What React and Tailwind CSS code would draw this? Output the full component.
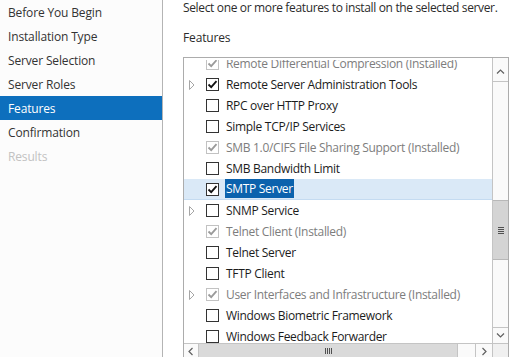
import React from 'react'

const steps = [
  { label: 'Before You Begin' },
  { label: 'Installation Type' },
  { label: 'Server Selection' },
  { label: 'Server Roles' },
  { label: 'Features', active: true },
  { label: 'Confirmation' },
  { label: 'Results', disabled: true },
]

const features = [
  { label: 'Remote Differential Compression (Installed)', checked: true, installed: true },
  { label: 'Remote Server Administration Tools', checked: true, expand: true },
  { label: 'RPC over HTTP Proxy' },
  { label: 'Simple TCP/IP Services' },
  { label: 'SMB 1.0/CIFS File Sharing Support (Installed)', checked: true, installed: true },
  { label: 'SMB Bandwidth Limit' },
  { label: 'SMTP Server', checked: true, selected: true },
  { label: 'SNMP Service', expand: true },
  { label: 'Telnet Client (Installed)', checked: true, installed: true },
  { label: 'Telnet Server' },
  { label: 'TFTP Client' },
  { label: 'User Interfaces and Infrastructure (Installed)', checked: true, installed: true, expand: true },
  { label: 'Windows Biometric Framework' },
  { label: 'Windows Feedback Forwarder' },
]

function Checkbox({ checked, installed }) {
  return (
    <span
      className={
        'w-[13px] h-[13px] shrink-0 border bg-white flex items-center justify-center ' +
        (installed ? 'border-[#c2c2c2]' : 'border-[#333333]')
      }
    >
      {checked && (
        <svg width="11" height="11" viewBox="0 0 11 11">
          <path
            d="M1.5 5.5 L4.2 8.2 L9.5 2.2"
            fill="none"
            stroke={installed ? '#9a9a9a' : '#111111'}
            strokeWidth="1.8"
          />
        </svg>
      )}
    </span>
  )
}

function Expander() {
  return (
    <svg width="7" height="10" viewBox="0 0 7 10" className="shrink-0">
      <path d="M1.5 0.5 L6 5 L1.5 9.5 Z" fill="none" stroke="#a6a6a6" strokeWidth="1" />
    </svg>
  )
}

function Caret({ dir }) {
  const d = {
    up: 'M1 5.5 L4.5 2 L8 5.5',
    down: 'M1 2.5 L4.5 6 L8 2.5',
    left: 'M5.5 1 L2 4.5 L5.5 8',
    right: 'M2.5 1 L6 4.5 L2.5 8',
  }[dir]
  return (
    <svg width="9" height="9" viewBox="0 0 9 9">
      <path d={d} fill="none" stroke="#606060" strokeWidth="1.2" />
    </svg>
  )
}

export default function App() {
  return (
    <div className="w-[515px] h-[357px] flex bg-white overflow-hidden text-[12px] font-['Open_Sans','Noto_Sans',sans-serif] tracking-[-0.15px]">
      {/* Wizard steps */}
      <aside className="w-[163px] shrink-0 bg-[#fcfcfc] border-r border-[#b4b4b4]">
        {steps.map((s) => (
          <div
            key={s.label}
            className={
              'h-[24px] pl-[8px] pt-[1px] flex items-center ' +
              (s.active
                ? 'bg-[#0d6fbd] text-white'
                : s.disabled
                ? 'text-[#c2c2c2]'
                : 'text-[#333333]')
            }
          >
            {s.label}
          </div>
        ))}
      </aside>

      {/* Main */}
      <main className="flex-1 min-w-0 pl-[20px] pr-[6px]">
        <p className="h-[16px] leading-[16px] text-[#2b2b2b] whitespace-nowrap tracking-[-0.35px]">
          Select one or more features to install on the selected server.
        </p>
        <p className="mt-[14px] h-[16px] leading-[16px] text-[#2b2b2b] font-medium">Features</p>

        <div className="mt-[11px] h-[304px] border border-[#acacac] flex flex-col">
          <div className="flex h-[285px]">
            {/* List */}
            <div className="flex-1 min-w-0 pt-[2px] flex flex-col">
              <div className="flex-1 overflow-hidden tracking-[-0.3px]">
                <div className="-mt-[7px]">
                  {features.map((f) => (
                    <div
                      key={f.label}
                      className={
                        'h-[21px] flex items-center whitespace-nowrap ' +
                        (f.selected ? 'bg-[#dae9f7] border-b border-[#c4dbf1]' : '')
                      }
                    >
                      <span className="w-[22px] pl-[4px] flex items-center">{f.expand && <Expander />}</span>
                      <Checkbox checked={f.checked} installed={f.installed} />
                      <span className="ml-[7px]">
                        {f.selected ? (
                          <span className="bg-[#0b62ad] text-white px-[1px] -ml-[1px] py-[1px]">{f.label}</span>
                        ) : (
                          <span className={f.installed ? 'text-[#7d7d7d]' : 'text-[#1c1c1c]'}>{f.label}</span>
                        )}
                      </span>
                    </div>
                  ))}
                </div>
              </div>
            </div>

            {/* Vertical scrollbar */}
            <div className="w-[16px] shrink-0 border-l border-[#c4c4c4] bg-[#fafafa] flex flex-col">
              <div className="h-[24px] border-b border-[#c4c4c4] flex items-end justify-center pb-[4px]">
                <Caret dir="up" />
              </div>
              <div className="h-[118px]" />
              <div className="h-[60px] bg-[#d4d4d4] border-y border-[#b8b8b8] flex flex-col items-center justify-center gap-[1px]">
                <span className="w-[6px] h-[1px] bg-[#505050]" />
                <span className="w-[6px] h-[1px] bg-[#505050]" />
                <span className="w-[6px] h-[1px] bg-[#505050]" />
                <span className="w-[6px] h-[1px] bg-[#505050]" />
              </div>
              <div className="flex-1" />
              <div className="h-[16px] border-t border-[#c4c4c4] flex items-center justify-center">
                <Caret dir="down" />
              </div>
            </div>
          </div>

          {/* Horizontal scrollbar */}
          <div className="h-[17px] border-t border-[#c4c4c4] flex bg-[#fafafa]">
            <div className="w-[14px] flex items-center justify-center pb-[2px]">
              <Caret dir="left" />
            </div>
            <div className="w-[260px] bg-[#dadada] border-x border-[#c4c4c4] flex items-center justify-center gap-[1px] pb-[2px]">
              <span className="w-[1px] h-[6px] bg-[#505050]" />
              <span className="w-[1px] h-[6px] bg-[#505050]" />
              <span className="w-[1px] h-[6px] bg-[#505050]" />
              <span className="w-[1px] h-[6px] bg-[#505050]" />
            </div>
            <div className="w-[17px]" />
            <div className="w-[17px] border-l border-[#c4c4c4] flex items-center justify-center pb-[2px]">
              <Caret dir="right" />
            </div>
            <div className="flex-1 border-l border-[#c4c4c4] bg-[#f0f0f0]" />
          </div>
        </div>
      </main>
    </div>
  )
}
